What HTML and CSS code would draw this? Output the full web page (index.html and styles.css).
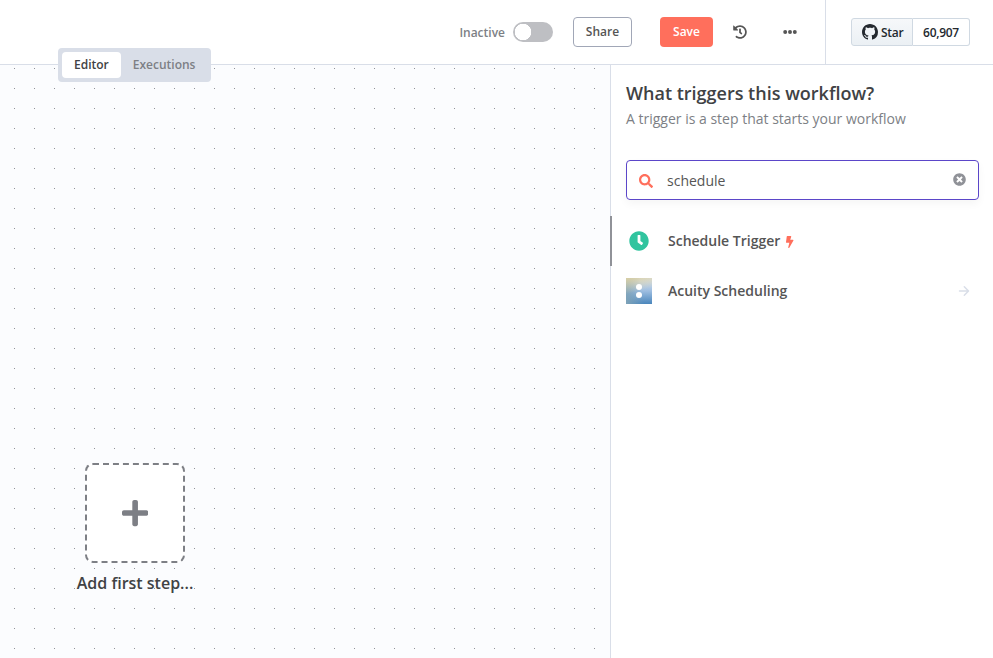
FILE: index.html
```html
<!DOCTYPE html>
<html lang="en">
<head>
    <meta charset="UTF-8">
    <meta name="viewport" content="width=device-width, initial-scale=1.0">
    <title>Workflow editor</title>
    <link rel="stylesheet" href="styles.css">
</head>
<body>
    <header class="header">
        <div class="actions">
            <span class="status">Inactive</span>
            <button class="toggle" aria-label="Activate workflow"></button>
            <button class="btn share">Share</button>
            <button class="btn save">Save</button>
            <svg class="history" viewBox="0 0 512 512"><path d="M504 255.531c.253 136.64-111.18 248.372-247.82 248.468-59.015.042-113.223-20.53-155.822-54.911-11.077-8.94-11.905-25.541-1.839-35.607l11.267-11.267c8.609-8.609 22.353-9.551 31.891-1.984C173.062 425.135 212.781 440 256 440c101.705 0 184-82.311 184-184 0-101.705-82.311-184-184-184-48.814 0-93.149 18.969-126.068 49.932l50.754 50.754c10.08 10.08 2.941 27.314-11.313 27.314H24c-8.837 0-16-7.163-16-16V38.627c0-14.254 17.234-21.393 27.314-11.314l49.372 49.372C129.209 34.136 189.552 8 256 8c136.81 0 247.747 110.78 248 247.531zm-180.912 78.784l9.823-12.63c8.138-10.463 6.253-25.542-4.21-33.679L288 256.349V152c0-13.255-10.745-24-24-24h-16c-13.255 0-24 10.745-24 24v135.651l65.409 50.874c10.463 8.137 25.541 6.253 33.679-4.21z"/></svg>
            <svg class="more" viewBox="0 0 512 512"><circle cx="256" cy="256" r="72"/><circle cx="432" cy="256" r="72"/><circle cx="80" cy="256" r="72"/></svg>
        </div>
        <div class="github">
            <a class="star">
                <svg viewBox="0 0 16 16"><path d="M8 0C3.58 0 0 3.58 0 8c0 3.54 2.29 6.53 5.47 7.59.4.07.55-.17.55-.38 0-.19-.01-.82-.01-1.49-2.01.37-2.53-.49-2.69-.94-.09-.23-.48-.94-.82-1.13-.28-.15-.68-.52-.01-.53.63-.01 1.08.58 1.23.82.72 1.21 1.87.87 2.33.66.07-.52.28-.87.51-1.07-1.78-.2-3.64-.89-3.64-3.95 0-.87.31-1.59.82-2.15-.08-.2-.36-1.02.08-2.12 0 0 .67-.21 2.2.82.64-.18 1.32-.27 2-.27s1.36.09 2 .27c1.53-1.04 2.2-.82 2.2-.82.44 1.1.16 1.92.08 2.12.51.56.82 1.27.82 2.15 0 3.07-1.87 3.75-3.65 3.95.29.25.54.73.54 1.48 0 1.07-.01 1.93-.01 2.2 0 .21.15.46.55.38A8.01 8.01 0 0 0 16 8c0-4.42-3.58-8-8-8z"/></svg>
                <span>Star</span>
            </a>
            <a class="count">60,907</a>
        </div>
    </header>

    <nav class="tabs">
        <a class="tab active">Editor</a>
        <a class="tab">Executions</a>
    </nav>

    <main class="main">
        <section class="canvas">
            <div class="first-step">
                <button class="add" aria-label="Add first step">
                    <svg viewBox="0 0 448 512"><path d="M416 208H272V64c0-17.67-14.33-32-32-32h-32c-17.67 0-32 14.33-32 32v144H32c-17.67 0-32 14.33-32 32v32c0 17.67 14.33 32 32 32h144v144c0 17.67 14.33 32 32 32h32c17.67 0 32-14.33 32-32V304h144c17.67 0 32-14.33 32-32v-32c0-17.67-14.33-32-32-32z"/></svg>
                </button>
                <span class="add-label">Add first step...</span>
            </div>
        </section>

        <aside class="panel">
            <div class="handle"></div>
            <h1 class="title">What triggers this workflow?</h1>
            <p class="subtitle">A trigger is a step that starts your workflow</p>
            <div class="search">
                <svg class="search-icon" viewBox="0 0 512 512"><path d="M505 442.700L405.300 343c-4.500-4.500-10.600-7-17-7H372c27.600-35.300 44-79.700 44-128C416 93.100 322.900 0 208 0S0 93.100 0 208s93.100 208 208 208c48.300 0 92.700-16.400 128-44v16.300c0 6.400 2.500 12.500 7 17l99.700 99.700c9.400 9.400 24.600 9.400 33.900 0l28.300-28.300c9.400-9.400 9.400-24.600.1-34zM208 336c-70.700 0-128-57.200-128-128 0-70.700 57.200-128 128-128 70.700 0 128 57.200 128 128 0 70.700-57.200 128-128 128z"/></svg>
                <input class="search-input" type="text" value="schedule">
                <svg class="clear" viewBox="0 0 512 512"><path d="M256 8C119 8 8 119 8 256s111 248 248 248 248-111 248-248S393 8 256 8zm121.600 313.100c4.700 4.700 4.700 12.300 0 17L338 377.600c-4.700 4.700-12.300 4.700-17 0L256 312l-65.100 65.600c-4.700 4.700-12.300 4.700-17 0L134.400 338c-4.700-4.700-4.700-12.300 0-17l65.600-65-65.600-65.100c-4.700-4.700-4.700-12.300 0-17l39.600-39.600c4.700-4.700 12.300-4.700 17 0l65 65.700 65.100-65.600c4.700-4.700 12.300-4.700 17 0l39.600 39.600c4.700 4.700 4.700 12.300 0 17L312 256l65.600 65.100z"/></svg>
            </div>
            <ul class="results">
                <li class="result">
                    <span class="node-icon">
                        <svg class="clock" viewBox="0 0 512 512"><path d="M256 8C119 8 8 119 8 256s111 248 248 248 248-111 248-248S393 8 256 8zm57.100 350.100L224.900 294c-3.100-2.300-4.900-5.900-4.900-9.700V116c0-6.600 5.400-12 12-12h48c6.600 0 12 5.400 12 12v137.700l63.500 46.200c5.400 3.900 6.500 11.400 2.600 16.800l-28.200 38.800c-3.900 5.300-11.400 6.500-16.800 2.600z"/></svg>
                    </span>
                    <span class="name">Schedule Trigger</span>
                    <svg class="bolt" viewBox="0 0 320 512"><path d="M296 160H180.600l42.600-129.800C227.200 15 215.700 0 200 0H56C44 0 33.800 8.900 32.200 20.800l-32 240C-1.700 275.200 9.500 288 24 288h118.700L96.600 482.500c-3.600 15.200 8 29.500 23.300 29.500 8.400 0 16.400-4.400 20.800-12l176-304c9.300-15.900-2.200-36-20.700-36z"/></svg>
                </li>
                <li class="result">
                    <span class="node-icon acuity"><i></i><i></i></span>
                    <span class="name">Acuity Scheduling</span>
                    <svg class="arrow" viewBox="0 0 12 12"><path d="M1.500 6H10.300M6.300 1.700L10.500 6L6.300 10.300"/></svg>
                </li>
            </ul>
        </aside>
    </main>
</body>
</html>
```

FILE: styles.css
```css
*{
    box-sizing: border-box;
}
body{
    margin: 0;
    height: 658px;
    display: flex;
    flex-direction: column;
    overflow: hidden;
    font-family: "Open Sans", sans-serif;
    color: #404244;
    background: #fff;
}
button{
    font-family: inherit;
    padding: 0;
}
svg{
    display: block;
    flex: none;
}

/* header */
.header{
    display: flex;
    justify-content: flex-end;
    height: 65px;
    flex: none;
    border-bottom: 1px solid #d9dee8;
}
.actions{
    display: flex;
    align-items: center;
    padding-right: 28px;
}
.status{
    font-size: 12px;
    font-weight: 600;
    line-height: 18px;
    color: #7d7f85;
    margin-top: 1px;
    margin-right: 8px;
}
.toggle{
    width: 40px;
    height: 20px;
    border: none;
    border-radius: 10px;
    background: radial-gradient(circle at 10px 10px, #fff 8px, transparent 8.5px) #bebfc3;
}
.btn{
    height: 30px;
    border-radius: 4px;
    font-size: 12px;
    font-weight: 600;
}
.share{
    width: 59px;
    margin-left: 20px;
    padding-bottom: 1px;
    border: 1px solid #a1a7b7;
    background: #fff;
    color: #555;
}
.save{
    width: 53px;
    margin-left: 28px;
    padding-bottom: 1px;
    border: none;
    background: #ff6f5c;
    color: #fff;
}
.history{
    width: 14px;
    height: 14px;
    margin-left: 20px;
    fill: #555;
}
.more{
    width: 14px;
    height: 14px;
    margin-left: 36px;
    fill: #555;
}
.github{
    display: flex;
    align-items: center;
    width: 168px;
    padding-left: 25px;
    border-left: 1px solid #d9dee8;
    font-size: 12px;
    font-weight: 600;
    letter-spacing: -0.3px;
    color: #24292f;
}
.star{
    display: flex;
    align-items: center;
    gap: 3px;
    width: 62px;
    height: 28px;
    padding-left: 10px;
    border: 1px solid #d0d9e2;
    border-radius: 3px 0 0 3px;
    background: linear-gradient(#f6f8fa, #ebf0f4);
}
.star svg{
    width: 16px;
    height: 16px;
    fill: #24292f;
}
.count{
    width: 57px;
    height: 28px;
    line-height: 27px;
    text-align: center;
    border: 1px solid #d0d9e2;
    border-left: none;
    border-radius: 0 3px 3px 0;
}

/* tabs sit over the header border */
.tabs{
    position: absolute;
    left: 58px;
    top: 48px;
    display: flex;
    width: 153px;
    height: 34px;
    padding: 4px;
    border-radius: 4px;
    background: #d9dee8;
}
.tab{
    height: 26px;
    padding: 0 12px;
    line-height: 26px;
    font-size: 12px;
    font-weight: 600;
    color: #7d7f85;
    border-radius: 4px;
}
.tab.active{
    background: #fff;
    color: #404244;
}

/* canvas */
.main{
    display: flex;
    flex: 1;
}
.canvas{
    width: 610px;
    padding: 398px 0 0 60px;
    background: radial-gradient(circle at 14.5px 3.5px, #909298 0.6px, transparent 0.7px) 0 0 / 20px 20px #fbfcfe;
}
.first-step{
    display: flex;
    flex-direction: column;
    align-items: center;
    width: 150px;
}
.add{
    display: flex;
    align-items: center;
    justify-content: center;
    width: 100px;
    height: 100px;
    border: 2px dashed #7d7f85;
    border-radius: 8px;
    background: #fff;
}
.add svg{
    height: 30px;
    fill: #7d7f85;
}
.add-label{
    margin-top: 9px;
    font-size: 16px;
    font-weight: 600;
    line-height: 22px;
}

/* node panel */
.panel{
    position: relative;
    flex: 1;
    padding: 16px 14px 0 15px;
    border-left: 1px solid #d9dee8;
}
.handle{
    position: absolute;
    left: -1px;
    top: 151px;
    width: 2px;
    height: 50px;
    background: #909298;
}
.title{
    margin: 0;
    font-size: 18px;
    font-weight: 600;
    line-height: 24px;
}
.subtitle{
    margin: 4px 0 31px;
    font-size: 14px;
    line-height: 20px;
    color: #7d7f85;
}
.search{
    display: flex;
    align-items: center;
    height: 40px;
    padding: 0 12px;
    border: 1px solid #5b46c9;
    border-radius: 4px;
    box-shadow: 0 4px 8px rgba(0, 0, 0, 0.04);
}
.search-icon{
    width: 14px;
    height: 14px;
    margin-top: 1px;
    fill: #ff6f5c;
}
.search-input{
    flex: 1;
    min-width: 0;
    margin-left: 14px;
    padding: 0;
    border: none;
    outline: none;
    font-family: inherit;
    font-size: 14px;
    color: #555;
}
.clear{
    width: 13px;
    height: 13px;
    margin-bottom: 1px;
    fill: #909298;
}
.results{
    margin: 16px 0 0;
    padding: 0;
    list-style: none;
}
.result{
    display: flex;
    align-items: center;
    height: 50px;
    padding-right: 9px;
}
.node-icon{
    display: flex;
    align-items: center;
    justify-content: center;
    width: 26px;
    height: 26px;
    margin-right: 16px;
}
.clock{
    width: 20px;
    height: 20px;
    fill: #31c49f;
}
.acuity{
    flex-direction: column;
    gap: 2px;
    background: linear-gradient(165deg, #d9cfa4 0%, rgba(217, 207, 164, 0) 50%), linear-gradient(80deg, #7fa3b8 0%, rgba(127, 163, 184, 0) 60%), linear-gradient(#dfe6ee, #9dbde0 50%, #4a86bc);
}
.acuity i{
    width: 6px;
    height: 6px;
    border-radius: 50%;
    background: #fff;
}
.name{
    font-size: 14px;
    font-weight: 600;
    line-height: 20px;
    color: #555;
}
.bolt{
    height: 12px;
    margin-top: 1px;
    margin-left: 6px;
    fill: #ff6f5c;
}
.arrow{
    width: 12px;
    height: 12px;
    margin-left: auto;
    fill: none;
    stroke: #d9dee8;
    stroke-width: 1.5;
    stroke-linecap: round;
    stroke-linejoin: round;
}
```
